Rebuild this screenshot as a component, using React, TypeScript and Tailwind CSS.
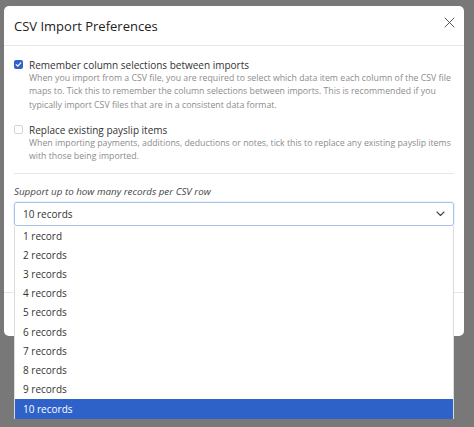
const recordOptions = [
  "1 record",
  "2 records",
  "3 records",
  "4 records",
  "5 records",
  "6 records",
  "7 records",
  "8 records",
  "9 records",
  "10 records",
];

export default function App() {
  const selected = "10 records";

  return (
    <div
      className="w-[474px] h-[427px] overflow-hidden bg-[#787878] pt-[6px] pl-[4px]"
      style={{ fontFamily: '"Open Sans", "Noto Sans", sans-serif' }}
    >
      {/* Modal */}
      <div className="w-[460px] h-[330px] bg-white rounded-[5px] flex flex-col">
        {/* Header */}
        <div className="h-[40px] shrink-0 flex items-center justify-between pl-[10px] pr-[9px] border-b border-[#e6e6e6]">
          <h2 className="text-[13px] text-[#222] leading-none mt-[1px]">CSV Import Preferences</h2>
          <svg width="11" height="11" viewBox="0 0 11 11" fill="none" className="-mt-[6px]">
            <path d="M1 1L10 10M10 1L1 10" stroke="#555" strokeWidth="1" strokeLinecap="round" />
          </svg>
        </div>

        {/* Body */}
        <div className="flex-1 px-[10px] pt-[13px]">
          <div className="pb-[10px] border-b border-[#e6e6e6]">
            {/* Option 1 */}
            <div className="flex gap-[6px]">
              <div className="w-[9px] h-[9px] mt-[1px] shrink-0 rounded-[2px] bg-[#2f63c7] flex items-center justify-center">
                <svg width="7" height="7" viewBox="0 0 7 7" fill="none">
                  <path d="M1.2 3.6L2.8 5.1L5.8 1.9" stroke="white" strokeWidth="1.2" strokeLinecap="round" strokeLinejoin="round" />
                </svg>
              </div>
              <div>
                <p className="text-[10px] leading-[13px] text-[#333]">Remember column selections between imports</p>
                <p className="text-[8.75px] leading-[13.3px] text-[#8c8c8c]">
                  When you import from a CSV file, you are required to select which data item each column of the CSV file maps to. Tick this to remember the column selections between imports. This is recommended if you typically import CSV files that are in a consistent data format.
                </p>
              </div>
            </div>

            {/* Option 2 */}
            <div className="flex gap-[6px] mt-[12px]">
              <div className="w-[9px] h-[9px] mt-[1px] shrink-0 rounded-[2px] border border-[#d4d4d4] bg-white" />
              <div>
                <p className="text-[10px] leading-[13px] text-[#333]">Replace existing payslip items</p>
                <p className="text-[8.75px] leading-[13.3px] text-[#8c8c8c]">
                  When importing payments, additions, deductions or notes, tick this to replace any existing payslip items with those being imported.
                </p>
              </div>
            </div>
          </div>

          {/* Records per row */}
          <div className="pt-[11px]">
            <p className="text-[9.8px] leading-[13px] italic text-[#444]">Support up to how many records per CSV row</p>
            <div className="relative mt-[4px]">
              <div className="h-[24px] flex items-center justify-between pl-[8px] pr-[8px] border border-[#a9c3e6] rounded-[3px] shadow-[0_0_0_1px_rgba(120,160,220,0.15)]">
                <span className="text-[10px] text-[#333]">{selected}</span>
                <svg width="9" height="6" viewBox="0 0 9 6" fill="none">
                  <path d="M1 1L4.5 4.5L8 1" stroke="#444" strokeWidth="1.1" strokeLinecap="round" strokeLinejoin="round" />
                </svg>
              </div>

              {/* Open option list */}
              <ul className="absolute left-0 right-0 top-full z-10 bg-white border-x border-[#dcdcdc]">
                {recordOptions.map((option) => (
                  <li
                    key={option}
                    className={`h-[19.22px] flex items-center pl-[8px] text-[10px] ${
                      option === selected ? "bg-[#2f62c9] text-white" : "text-[#333]"
                    }`}
                  >
                    {option}
                  </li>
                ))}
              </ul>
            </div>
          </div>
        </div>

        {/* Footer */}
        <div className="h-[44px] shrink-0 border-t border-[#e6e6e6]" />
      </div>
    </div>
  );
}
